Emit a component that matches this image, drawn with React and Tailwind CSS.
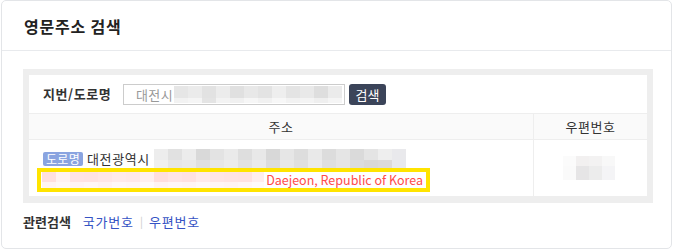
import React from 'react';

// mosaic tiles for the blurred-out parts of the screenshot
const inputTop = ['bg-[#e6e6e6]', 'bg-[#ebebeb]', 'bg-[#e2e2e2]', 'bg-[#ececec]', 'bg-[#e0e0e0]', 'bg-[#e8e8e8]', 'bg-[#e3e3e3]', 'bg-[#eeeeee]', 'bg-[#e4e4e4]', 'bg-[#e9e9e9]', 'bg-[#dedede]', 'bg-[#ebebeb]'];
const inputBottom = ['bg-[#f2f2f2]', 'bg-[#f5f5f5]', 'bg-[#e4e4e4]', 'bg-[#f3f3f3]', 'bg-[#f0f0f0]', 'bg-[#f6f6f6]', 'bg-[#f1f1f1]', 'bg-[#f7f7f7]', 'bg-[#f2f2f2]', 'bg-[#f4f4f4]', 'bg-[#efefef]', 'bg-[#f5f5f5]'];
const addrTop = ['bg-[#ededed]', 'bg-[#e1e1e1]', 'bg-[#ececec]', 'bg-[#d9d9d9]', 'bg-[#e3e3e3]', 'bg-[#eaeaea]', 'bg-[#dedede]', 'bg-[#e8e8e8]', 'bg-[#d8d8d8]', 'bg-[#e6e6e6]', 'bg-[#dddddd]', 'bg-[#e9e9e9]', 'bg-[#dcdcdc]', 'bg-[#e5e5e5]', 'bg-[#dadada]', 'bg-[#e4e4e4]', 'bg-[#eeeeee]', 'bg-[#e9e9ec]'];
const addrBottom = ['bg-[#f0f0f0]', 'bg-[#e6e6e6]', 'bg-[#e9e9e9]', 'bg-[#dfdfdf]', 'bg-[#e7e7e7]', 'bg-[#ececec]', 'bg-[#e2e2e2]', 'bg-[#eaeaea]', 'bg-[#dcdcdc]', 'bg-[#e8e8e8]', 'bg-[#e0e0e0]', 'bg-[#ebebeb]', 'bg-[#dfdfdf]', 'bg-[#e6e4e4]', 'bg-[#dbdcde]', 'bg-[#d9d8d8]', 'bg-[#dcdada]', 'bg-[#e8e9ee]'];
const engTop = ['bg-[#ffe0e0]', 'bg-[#fff2f2]', 'bg-[#ffe3e3]', 'bg-[#ffe2e2]', 'bg-[#ffe6e6]', 'bg-[#ffeaea]', 'bg-[#ffe8e8]', 'bg-[#fff0f0]', 'bg-[#ffdede]', 'bg-[#ffe4e4]', 'bg-[#ffe1e1]', 'bg-[#ffeaea]', 'bg-[#ffe5e5]', 'bg-[#ffe3e3]', 'bg-[#ffe2e2]', 'bg-[#ffeeee]'];
const engBottom = ['bg-[#fff4f4]', 'bg-[#fff8f8]', 'bg-[#fff3f3]', 'bg-[#fff6f6]', 'bg-[#fff2f2]', 'bg-[#fff7f7]', 'bg-[#fff5f5]', 'bg-[#fffafa]', 'bg-[#fff3f3]', 'bg-[#fff6f6]', 'bg-[#fff4f4]', 'bg-[#fff8f8]', 'bg-[#fff5f5]', 'bg-[#fff3f3]', 'bg-[#fff6f6]', 'bg-[#fffafa]'];
const zipTop = ['bg-[#fbfbfb]', 'bg-[#f2f0f0]', 'bg-[#f3f2f2]', 'bg-[#f8f8f8]'];
const zipBottom = ['bg-[#fafafa]', 'bg-[#e6e5e6]', 'bg-[#ececec]', 'bg-[#f4f4f6]'];

const Mosaic = ({ top, bottom, topH, bottomH, tileW, className = 'shrink-0' }) => (
  <div className={`flex flex-col ${className}`}>
    <div className="flex">
      {top.map((c, i) => (
        <div key={i} className={`${c} ${tileW} ${topH} shrink-0`} />
      ))}
    </div>
    <div className="flex">
      {bottom.map((c, i) => (
        <div key={i} className={`${c} ${tileW} ${bottomH} shrink-0`} />
      ))}
    </div>
  </div>
);

export default function App() {
  return (
    <div
      className="w-[674px] h-[252px] bg-white"
      style={{ fontFamily: '"Noto Sans CJK KR", "Noto Sans", sans-serif' }}
    >
      <div className="ml-[1px] w-[671px] h-[249px] border border-[#e3e5e8] rounded-[5px] bg-white">
        {/* Header */}
        <div className="h-[50px] flex items-center px-[22px] border-b border-[#e8eaed]">
          <h2 className="text-[16px] font-bold text-[#222] leading-none tracking-[0.8px]">영문주소 검색</h2>
        </div>

        {/* Result box */}
        <div className="pt-[18px] px-[21px]">
          <div className="w-[630px] bg-[#eeeeee] p-[6px] pb-[7px]">
            <div className="bg-white">
              {/* Search row */}
              <div className="h-[39px] flex items-center pl-[14px] border-b border-[#eeeeee]">
                <span className="text-[13px] font-bold text-[#333] w-[80px] tracking-[0.6px]">지번/도로명</span>
                <div className="w-[222px] h-[21px] border border-[#cccccc] flex items-center pl-[12px] overflow-hidden">
                  <span className="text-[13px] text-[#999] leading-none tracking-[0.4px]">대전시</span>
                  <div className="ml-[1px]">
                    <Mosaic top={inputTop} bottom={inputBottom} topH="h-[12px]" bottomH="h-[5px]" tileW="w-[14px]" />
                  </div>
                </div>
                <button className="ml-[4px] w-[37px] h-[21px] bg-[#3b4459] rounded-[3px] text-white text-[13px] leading-none flex items-center justify-center">
                  검색
                </button>
              </div>

              {/* Table header */}
              <div className="flex h-[26px] bg-[#fafafa] border-b border-[#eeeeee] text-[13px] text-[#333] tracking-[0.6px]">
                <div className="w-[504px] flex items-center justify-center">주소</div>
                <div className="flex-1 flex items-center justify-center border-l border-[#eeeeee]">우편번호</div>
              </div>

              {/* Result row */}
              <div className="flex h-[56px]">
                <div className="w-[504px] pl-[8px] pt-[9px]">
                  <div className="flex items-center ml-[6px] h-[19px]">
                    <span className="bg-[#8aa4e0] text-white text-[12px] leading-none px-[3px] h-[14px] flex items-center rounded-[2px] tracking-[0.3px]">
                      도로명
                    </span>
                    <span className="ml-[4px] text-[13px] text-[#333] leading-none tracking-[0.6px]">대전광역시</span>
                    <div className="ml-[4px]">
                      <Mosaic top={addrTop} bottom={addrBottom} topH="h-[11px]" bottomH="h-[8px]" tileW="w-[14px]" />
                    </div>
                  </div>
                  <div className="w-[393px] h-[24px] border-[4px] border-[#ffe400] flex items-center pl-[1px] pr-[3px] overflow-hidden">
                    <Mosaic
                      top={engTop}
                      bottom={engBottom}
                      topH="h-[10px]"
                      bottomH="h-[6px]"
                      tileW="w-[14px]"
                      className="flex-1 min-w-0 overflow-hidden mr-[2px]"
                    />
                    <span className="shrink-0 text-[12.5px] text-[#ff4b4b] leading-none whitespace-nowrap">
                      Daejeon, Republic of Korea
                    </span>
                  </div>
                </div>
                <div className="flex-1 border-l border-[#eeeeee] flex items-center justify-center">
                  <div className="ml-[-4px]">
                    <Mosaic top={zipTop} bottom={zipBottom} topH="h-[10px]" bottomH="h-[14px]" tileW="w-[13px]" />
                  </div>
                </div>
              </div>
            </div>
          </div>
        </div>

        {/* Related search */}
        <div className="flex items-center px-[21px] pt-[12px] text-[13px] leading-none">
          <span className="font-bold text-[#333]">관련검색</span>
          <a className="ml-[12px] text-[#3553c4] tracking-[0.8px]">국가번호</a>
          <span className="mx-[6px] text-[#ccc] text-[11px]">|</span>
          <a className="text-[#3553c4] tracking-[0.8px]">우편번호</a>
        </div>
      </div>
    </div>
  );
}
